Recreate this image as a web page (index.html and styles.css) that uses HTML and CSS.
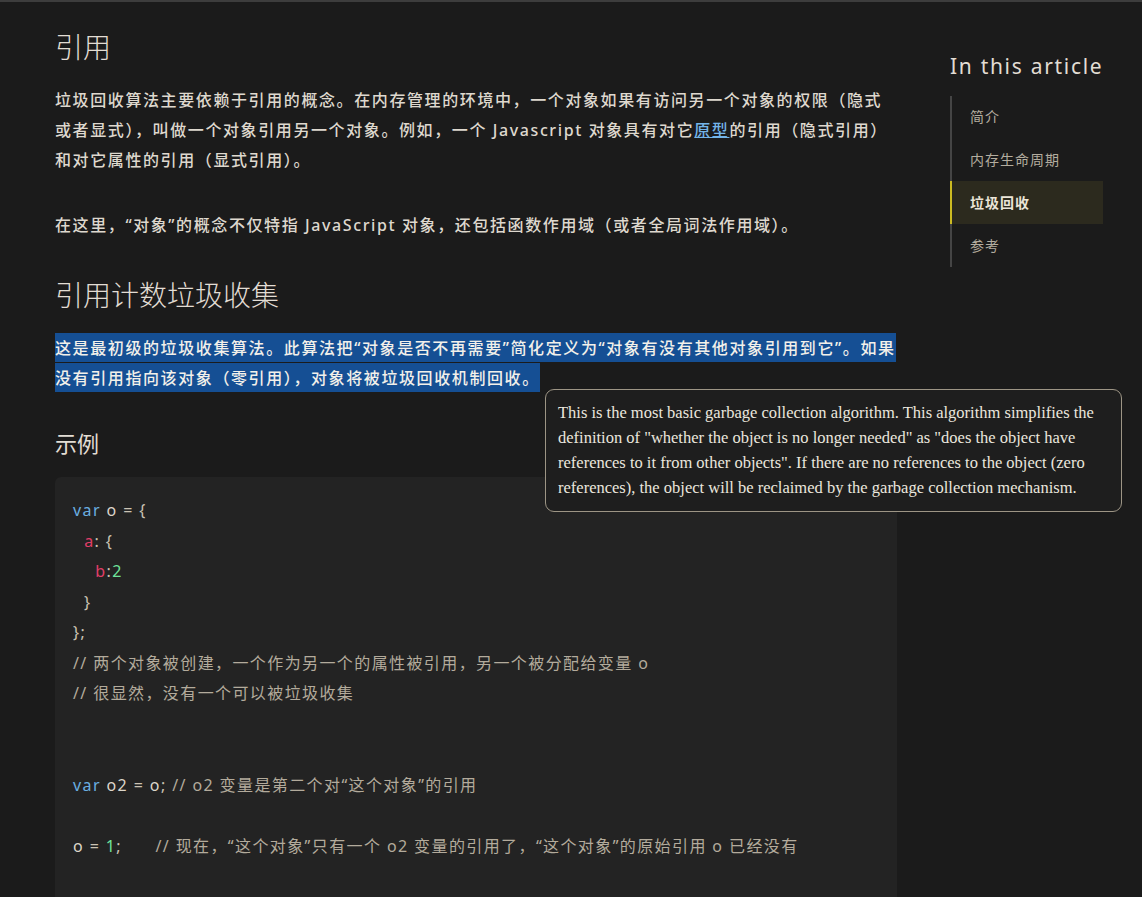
FILE: index.html
```html
<!DOCTYPE html>
<html>
<head>
  <title>内存管理 - 垃圾回收</title>
  <link rel="stylesheet" href="styles.css">
</head>
<body>
  <div class="page">
    <main class="article">
      <h2 class="heading">引用</h2>
      <p class="text">垃圾回收算法主要依赖于引用的概念。在内存管理的环境中，一个对象如果有访问另一个对象的权限（隐式或者显式），叫做一个对象引用另一个对象。例如，一个 Javascript 对象具有对它<a href="#" class="link">原型</a>的引用（隐式引用）和对它属性的引用（显式引用）。</p>
      <p class="text">在这里，“对象”的概念不仅特指 JavaScript 对象，还包括函数作用域（或者全局词法作用域）。</p>

      <h2 class="heading">引用计数垃圾收集</h2>
      <p class="text text-tight"><span class="selected">这是最初级的垃圾收集算法。此算法把“对象是否不再需要”简化定义为“对象有没有其他对象引用到它”。如果没有引用指向该对象（零引用），对象将被垃圾回收机制回收。</span></p>

      <h3 class="subheading">示例</h3>
      <pre class="code"><span class="kw">var</span> <span class="id">o</span> = {
  <span class="prop">a</span>: {
    <span class="prop">b</span>:<span class="num">2</span>
  }
};
<span class="cm">// 两个对象被创建，一个作为另一个的属性被引用，另一个被分配给变量 o</span>
<span class="cm">// 很显然，没有一个可以被垃圾收集</span>


<span class="kw">var</span> <span class="id">o2</span> = <span class="id">o</span>; <span class="cm">// o2 变量是第二个对“这个对象”的引用</span>

<span class="id">o</span> = <span class="num">1</span>;      <span class="cm">// 现在，“这个对象”只有一个 o2 变量的引用了，“这个对象”的原始引用 o 已经没有</span>


</pre>
    </main>

    <aside class="toc">
      <h2 class="toc-title">In this article</h2>
      <ul class="toc-list">
        <li class="toc-item">简介</li>
        <li class="toc-item">内存生命周期</li>
        <li class="toc-item active">垃圾回收</li>
        <li class="toc-item">参考</li>
      </ul>
    </aside>
  </div>

  <div class="tooltip">
    This is the most basic garbage collection algorithm. This algorithm simplifies the definition of "whether the object is no longer needed" as "does the object have references to it from other objects". If there are no references to the object (zero references), the object will be reclaimed by the garbage collection mechanism.
  </div>
</body>
</html>
```

FILE: styles.css
```css
:root {
  --bg: #1b1b1b;
  --code-bg: #232323;
  --text: #ded8ce;
  --heading: #e2ddd4;
  --muted: #b6ae9f;
  --border: #454545;
  --accent: #cdbb22;
}

* {
  margin: 0;
  padding: 0;
  box-sizing: border-box;
}

html,
body {
  height: 100%;
  overflow: hidden;
}

body {
  font-family: "Noto Sans", "Noto Sans CJK SC", sans-serif;
  background-color: var(--bg);
  color: var(--text);
  border-top: 2px solid #3d3d3d;
}

.page {
  display: flex;
  gap: 53px;
  padding-left: 55px;
}

.article {
  width: 842px;
  flex-shrink: 0;
  padding-top: 25px;
}

.heading {
  font-size: 28px;
  font-weight: 300;
  line-height: 40px;
  color: var(--heading);
  margin-bottom: 18px;
}

.text {
  font-size: 16px;
  font-weight: 500;
  line-height: 30px;
  letter-spacing: 1.6px;
  margin-bottom: 35px;
}

.text-tight {
  margin-bottom: 33px;
}

.link {
  color: #73b4e8;
  text-decoration: underline;
}

.selected {
  background-color: #154f94;
  color: #f2f0ea;
  padding: 4px 0 3px;
}

.subheading {
  font-size: 22px;
  font-weight: 400;
  line-height: 34px;
  color: var(--heading);
  margin-bottom: 17px;
}

/* Code block */
.code {
  font-family: "Noto Sans", "Noto Sans CJK SC", sans-serif;
  font-size: 16px;
  line-height: 30.5px;
  letter-spacing: 1.4px;
  background-color: var(--code-bg);
  color: #cbc3b4;
  border-radius: 6px;
  padding: 18px 18px 40px;
  white-space: pre;
}

.kw {
  color: #6aaee0;
}

.id {
  color: #ddd6ca;
}

.prop {
  color: #e03e68;
}

.num {
  color: #6fe39a;
}

.cm {
  color: #b3ab9c;
}

/* Sidebar */
.toc {
  width: 153px;
  padding-top: 49px;
}

.toc-title {
  font-size: 21px;
  font-weight: 400;
  line-height: 30px;
  letter-spacing: 1.7px;
  color: var(--heading);
  margin-bottom: 15px;
  white-space: nowrap;
}

.toc-list {
  list-style: none;
  border-left: 2px solid var(--border);
}

.toc-item {
  font-size: 14px;
  line-height: 43px;
  letter-spacing: 1px;
  padding-left: 18px;
  color: #b4ad9f;
}

.toc-item:first-child {
  line-height: 42px;
}

.toc-item.active {
  margin-left: -2px;
  padding-left: 18px;
  border-left: 2px solid var(--accent);
  background-color: #2c2a1e;
  color: #ebe5d8;
  font-weight: 700;
}

/* Tooltip over the article */
.tooltip {
  position: absolute;
  left: 545px;
  top: 389px;
  width: 577px;
  padding: 10px 12px 11px;
  font-family: "Liberation Serif", serif;
  font-size: 16.5px;
  line-height: 25px;
  color: #ebe7de;
  background-color: #1e1e1e;
  border: 1px solid #9d9585;
  border-radius: 9px;
}
```
